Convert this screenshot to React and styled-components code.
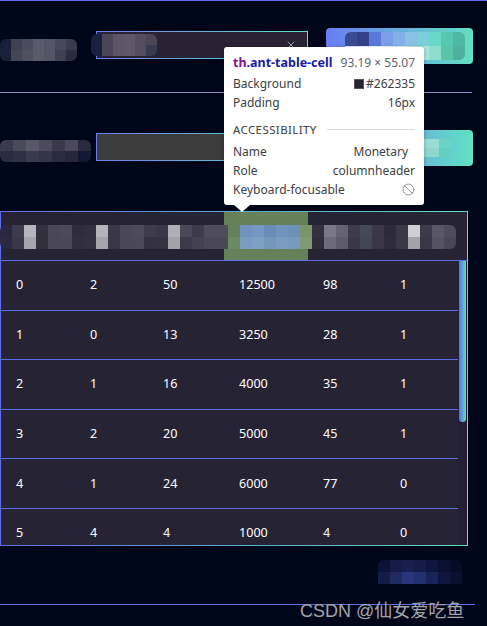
import React from 'react';
import styled, { createGlobalStyle } from 'styled-components';
import { X, Ban } from 'lucide-react';

const GlobalStyle = createGlobalStyle`
  * {
    margin: 0;
    padding: 0;
    box-sizing: border-box;
  }
  body {
    background: #00061a;
    font-family: "Noto Sans", "Noto Sans CJK SC", sans-serif;
  }
`;

const Page = styled.div`
  position: relative;
  width: 487px;
  height: 626px;
  overflow: hidden;
  background: #00061a;
  border-top: 1px solid #5b6ee6;
`;

// ---- filtros ----
const FilterRow = styled.div`
  display: flex;
  align-items: flex-start;
  padding-top: ${p => p.$top}px;
  height: ${p => p.$height}px;
`;

const Label = styled.div`
  width: 96px;
  height: 36px;
  display: flex;
  align-items: center;
  padding-top: ${p => p.$shift || 0}px;
`;

const Input = styled.div`
  position: relative;
  width: 212px;
  height: 28px;
  margin-top: 3px;
  background: ${p => p.$bg};
  border: 1px solid transparent;
  border-image: linear-gradient(to right, #6a7ff0, #5ee0c0) 1;
  display: flex;
  align-items: center;
  justify-content: space-between;
  padding-right: 10px;
  color: #b9b9c4;
`;

const Button = styled.div`
  width: 147px;
  height: 36px;
  margin-left: 18px;
  border-radius: 4px;
  background: linear-gradient(to right, #6a7cf2, #62e0c4);
  display: flex;
  align-items: center;
  padding-left: ${p => p.$pad}px;
`;

const Divider = styled.div`
  width: 472px;
  height: 1px;
  background: #8a8fc4;
`;

// mosaico (texto pixelado)
const MosaicGrid = styled.div`
  display: grid;
  grid-template-columns: repeat(${p => p.$cols}, ${p => p.$w}px);
  grid-auto-rows: ${p => p.$h}px;
  filter: blur(0.6px);
  border-radius: 6px;
  overflow: hidden;
  margin-left: ${p => p.$ml || 0}px;
`;

const Tile = styled.span`
  background: ${p => p.$c};
`;

const Mosaic = ({ rows, w = 12, h = 12, ml }) => (
  <MosaicGrid $cols={rows[0].length} $w={w} $h={h} $ml={ml}>
    {rows.flat().map((c, i) => <Tile key={i} $c={c} />)}
  </MosaicGrid>
);

// ---- tabela ----
const Table = styled.div`
  width: 468px;
  border: 1px solid transparent;
  border-image: linear-gradient(to right, #5b6ee6, #5ee0c0) 1;
  background: #262335;
`;

const HeadRow = styled.div`
  position: relative;
  display: flex;
  height: 49px;
  border-bottom: 1px solid #5b6ee6;
`;

const HeadCell = styled.div`
  width: ${p => p.$w}px;
  height: 100%;
  padding: 13px 14px;
  background: ${p => (p.$hl ? '#66805a' : 'transparent')};
`;

const HeadContent = styled.div`
  width: 100%;
  height: 100%;
  background: ${p => (p.$hl ? '#5f86b4' : 'transparent')};
`;

const HeadMosaic = styled.div`
  position: absolute;
  left: -1px;
  top: 13px;
`;

const Body = styled.div`
  display: flex;
  height: 284px;
`;

const Rows = styled.div`
  flex: 1;
  overflow: hidden;
`;

const Row = styled.div`
  display: flex;
  align-items: center;
  height: 49.6px;
  border-bottom: 1px solid #5b6ee6;
`;

const Cell = styled.div`
  width: ${p => p.$w}px;
  padding-left: 15px;
  color: #ffffff;
  font-size: 12.6px;
  line-height: 20px;
`;

const Track = styled.div`
  width: 9px;
  background: #241f32;
  padding-left: 1px;
`;

const Thumb = styled.div`
  width: 7px;
  height: 161px;
  border-radius: 0 0 4px 4px;
  background: linear-gradient(to right, #5b6ee6, #5ee0c0);
`;

// ---- rodapé ----
const Footer = styled.div`
  height: 59px;
  display: flex;
  justify-content: flex-end;
  padding: 14px 13px 0 0;
  border-bottom: 1px solid #5b6ee6;
  width: 475px;
`;

const Watermark = styled.div`
  position: absolute;
  left: 300px;
  top: 595px;
  font-family: "Liberation Sans", "Noto Sans CJK SC", sans-serif;
  font-size: 18px;
  color: #a3a3a8;
  white-space: nowrap;
`;

// ---- tooltip do devtools ----
const Tooltip = styled.div`
  position: absolute;
  left: 224px;
  top: 46px;
  width: 200px;
  height: 158px;
  background: #ffffff;
  border-radius: 3px;
  padding: 6px 9px 0 9px;
  font-family: "Noto Sans", sans-serif;
  font-size: 12px;
  color: #3c4043;
  box-shadow: 0 1px 4px rgba(0, 0, 0, 0.3);

  &::after {
    content: '';
    position: absolute;
    left: 10px;
    bottom: -7px;
    border-left: 8px solid transparent;
    border-right: 8px solid transparent;
    border-top: 7px solid #ffffff;
  }
`;

const TipRow = styled.div`
  display: flex;
  justify-content: space-between;
  align-items: center;
  height: 19px;
  margin-top: ${p => p.$mt || 0}px;
`;

const TipTitle = styled.span`
  font-weight: 700;
  color: #1a1aa6;
  font-size: 12.5px;
`;

const TipTag = styled.span`
  color: #881280;
`;

const TipSize = styled.span`
  color: #5f6368;
`;

const Swatch = styled.span`
  display: inline-block;
  width: 10px;
  height: 10px;
  background: #262335;
  border: 1px solid #555;
  margin-right: 2px;
  vertical-align: -1px;
`;

const SectionTitle = styled.div`
  display: flex;
  align-items: center;
  gap: 10px;
  height: 19px;
  margin-top: 8px;
  font-size: 11.5px;
  letter-spacing: 0.4px;
  color: #3c4043;

  &::after {
    content: '';
    flex: 1;
    height: 1px;
    background: #dadce0;
  }
`;

const larguras = [74, 73, 76, 84, 77, 73];

const dados = [
  [0, 2, 50, 12500, 98, 1],
  [1, 0, 13, 3250, 28, 1],
  [2, 1, 16, 4000, 35, 1],
  [3, 2, 20, 5000, 45, 1],
  [4, 1, 24, 6000, 77, 0],
  [5, 4, 4, 1000, 4, 0],
];

const mosaicoCabecalho = [
  ['#2a2840', '#3e3c4c', '#b6b5bd', '#34313f', '#4a4858', '#4c4959', '#302d3b', '#33303e', '#b5b4bc', '#3a3746', '#4a4757', '#4d4a5a', '#3e3b4a', '#3a3848', '#b0afb7', '#4a4758', '#3d3a49', '#4f4c5b', '#4f4c5b', '#66805a', '#6f92c0', '#7498c2', '#6a8cb8', '#7094bc', '#6d90b8', '#7a9470', '#333140', '#7b7885', '#666370', '#3e3b4a', '#464a55', '#3a3746', '#2d2a3a', '#3a3746', '#cfced4', '#3c3948', '#5a5766', '#4f4c5b'],
  ['#2c2a42', '#3a3848', '#a6a5ad', '#33303e', '#4a4858', '#4a4757', '#322f3d', '#34313f', '#a5a4ac', '#393645', '#4a4757', '#4b4858', '#35323f', '#353242', '#a3a2aa', '#3c3948', '#444150', '#4a4756', '#4a4756', '#6b8a62', '#7a9cc0', '#7ea0c2', '#7498bc', '#7a9cc0', '#779abc', '#7e9878', '#2f2d3c', '#6e6b78', '#5e5b68', '#3a3746', '#434752', '#393645', '#2f2c3c', '#3a3746', '#a3a2aa', '#3a3746', '#555261', '#4a4756'],
];

const mosaicoBotao1 = [
  ['#3a4a94', '#34408a', '#5a78d8', '#7a9ee8', '#85b0e6', '#8ac0e2', '#7ad0d8', '#6ad8c8', '#56c8b2', '#4fb8a0'],
  ['#e6edf8', '#f0f4fa', '#f4f8fb', '#f2f7f9', '#e8f4f6', '#c8ece6', '#a8e6dc', '#90ddd0', '#5cc4aa', '#4fb0a0'],
];

const mosaicoBotao2 = [
  ['#7cc8dc', '#84cedc', '#8ad2dc', '#90d6da', '#98dcd8', '#a0e0d8', '#9adcd6', '#6cd4c4'],
  ['#6cbcd6', '#74c4d6', '#7ccad6', '#84d0d4', '#8cd4d2', '#92d8d0', '#8ed6ce', '#66d0c0'],
];

const mosaicoLabel1 = [
  ['#1a1f3a', '#3f4152', '#4a4b5c', '#5a5b68', '#545566', '#474859', '#3a3b4c'],
  ['#1a1f3a', '#444657', '#50515f', '#5a5b68', '#545566', '#3f4050', '#2a2c40'],
];

const mosaicoInput1 = [
  ['#1c2040', '#4a4658', '#5a5666', '#5c5868', '#524e5e', '#4a4656'],
  ['#1c2040', '#4a4658', '#5a5666', '#5c5868', '#524e5e', '#3a3a4e'],
];

const mosaicoLabel2 = [
  ['#3a3b4d', '#4a4a5c', '#5a5868', '#4c4a5c', '#3a384a', '#4a485a', '#2a2a40'],
  ['#2a2b40', '#2f3045', '#383a4e', '#343548', '#2a2b40', '#25263c', '#141834'],
];

const mosaicoRodape = [
  ['#0c1338', '#141c48', '#182050', '#141c48', '#0e1540', '#0a1030', '#070c26'],
  ['#141c48', '#1e2a60', '#27357a', '#223070', '#182458', '#0e1640', '#0a1030'],
];

class App extends React.Component {
  render() {
    return (
      <Page>
        <GlobalStyle />

        {/* filtro 1 */}
        <FilterRow $top={27} $height={91}>
          <Label $shift={8}>
            <Mosaic rows={mosaicoLabel1} w={11} h={11} />
          </Label>
          <Input $bg="#272334">
            <Mosaic rows={mosaicoInput1} w={11} h={11} ml={-6} />
            <X size={12} strokeWidth={1.6} color="#b9b9c4" />
          </Input>
          <Button $pad={19}>
            <Mosaic rows={mosaicoBotao1} w={12} h={14} />
          </Button>
        </FilterRow>

        <Divider />

        {/* filtro 2 */}
        <FilterRow $top={37} $height={118}>
          <Label $shift={6}>
            <Mosaic rows={mosaicoLabel2} w={13} h={11} />
          </Label>
          <Input $bg="#3c3c3c" />
          <Button $pad={22}>
            <Mosaic rows={mosaicoBotao2} w={13} h={9} />
          </Button>
        </FilterRow>

        {/* tabela */}
        <Table>
          <HeadRow>
            {larguras.map((w, i) => (
              <HeadCell key={i} $w={i === 5 ? w + 9 : w} $hl={i === 3}>
                <HeadContent $hl={i === 3} />
              </HeadCell>
            ))}
            <HeadMosaic>
              <Mosaic rows={mosaicoCabecalho} w={12} h={12} />
            </HeadMosaic>
          </HeadRow>
          <Body>
            <Rows>
              {dados.map((linha, r) => (
                <Row key={r}>
                  {linha.map((v, c) => (
                    <Cell key={c} $w={larguras[c]}>{v}</Cell>
                  ))}
                </Row>
              ))}
            </Rows>
            <Track>
              <Thumb />
            </Track>
          </Body>
        </Table>

        <Footer>
          <Mosaic rows={mosaicoRodape} w={12} h={12} />
        </Footer>

        <Watermark>CSDN @仙女爱吃鱼</Watermark>

        <Tooltip>
          <TipRow>
            <TipTitle><TipTag>th</TipTag>.ant-table-cell</TipTitle>
            <TipSize>93.19 × 55.07</TipSize>
          </TipRow>
          <TipRow $mt={2}>
            <span>Background</span>
            <span><Swatch />#262335</span>
          </TipRow>
          <TipRow>
            <span>Padding</span>
            <span>16px</span>
          </TipRow>
          <SectionTitle>ACCESSIBILITY</SectionTitle>
          <TipRow $mt={3}>
            <span>Name</span>
            <span style={{ marginRight: 7 }}>Monetary</span>
          </TipRow>
          <TipRow>
            <span>Role</span>
            <span>columnheader</span>
          </TipRow>
          <TipRow>
            <span>Keyboard-focusable</span>
            <Ban size={13} strokeWidth={1.6} color="#80868b" />
          </TipRow>
        </Tooltip>
      </Page>
    );
  }
}

export default App;
